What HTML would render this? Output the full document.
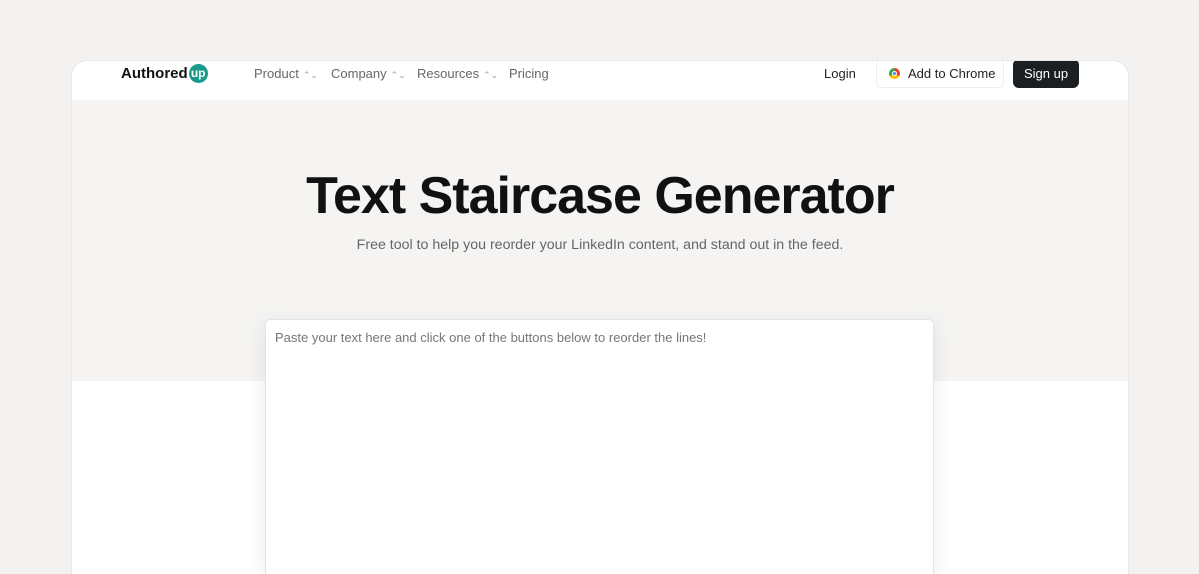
<!DOCTYPE html>
<html><head><style>
*{box-sizing:border-box;margin:0;padding:0}
html,body{width:1199px;height:574px;overflow:hidden}
body{background:#f3f2f0;font-family:"Liberation Sans",sans-serif;position:relative}
.card{position:absolute;left:71px;top:60px;width:1058px;height:514px;background:#fff;border:1px solid #e8e7e5;border-bottom:none;border-radius:16px 16px 0 0;overflow:hidden}
.hero{position:absolute;left:0;top:39px;width:100%;height:281px;background:#f5f4f2}
.nav{position:absolute;top:0;left:0;width:100%;height:26px;font-size:13px;color:#666}
.nav span{position:absolute;top:5px;white-space:nowrap}
.car{font-size:9px;color:#999;margin-left:4px;font-style:normal}
h1{position:absolute;top:66px;left:0;width:100%;text-align:center;font-size:52px;line-height:60px;font-weight:700;letter-spacing:-1px;color:#111}
.sub{position:absolute;top:137px;width:100%;text-align:center;font-size:14.2px;color:#666}
.ta{position:absolute;left:265px;top:319px;width:669px;height:255px;background:#fff;border:1px solid #e3e3e3;border-bottom:none;border-radius:5px 5px 0 0;box-shadow:0 4px 18px rgba(0,0,0,.09);font-size:13px;color:#777;padding:10px 9px}
</style></head><body>
<div class="card">
<div class="hero"><h1>Text Staircase Generator</h1><div class="sub">Free tool to help you reorder your LinkedIn content, and stand out in the feed.</div></div>
<div class="nav">
<span style="left:49px;top:3px;font-size:15px;font-weight:700;color:#111;line-height:19px">Authored<b style="display:inline-block;width:19px;height:19px;border-radius:50%;background:#1a9a8a;color:#fff;font-size:12px;text-align:center;line-height:19px;vertical-align:top;margin-left:1px">up</b></span>
<span style="left:182px">Product<i class="car">⌃⌄</i></span>
<span style="left:259px">Company<i class="car">⌃⌄</i></span>
<span style="left:345px">Resources<i class="car">⌃⌄</i></span>
<span style="left:437px">Pricing</span>
<span style="left:752px;color:#222">Login</span>
<div style="position:absolute;left:804px;top:-2px;width:128px;height:29px;border:1px solid #eee;border-radius:6px;font-size:13px;color:#222;padding:6px 0 0 31px;white-space:nowrap">Add to Chrome<i style="position:absolute;left:12px;top:8px;width:11px;height:11px;border-radius:50%;background:conic-gradient(#ea4335 0 120deg,#fbbc05 0 240deg,#34a853 0);"><i style="position:absolute;left:3px;top:3px;width:5px;height:5px;border-radius:50%;background:#4285f4;border:1px solid #fff"></i></i></div>
<div style="position:absolute;left:941px;top:-2px;width:66px;height:29px;background:#1c1f22;border-radius:6px;color:#fff;font-size:13px;text-align:center;padding-top:7px">Sign up</div>
</div>
</div>
<div class="ta">Paste your text here and click one of the buttons below to reorder the lines!</div>
</body></html>
